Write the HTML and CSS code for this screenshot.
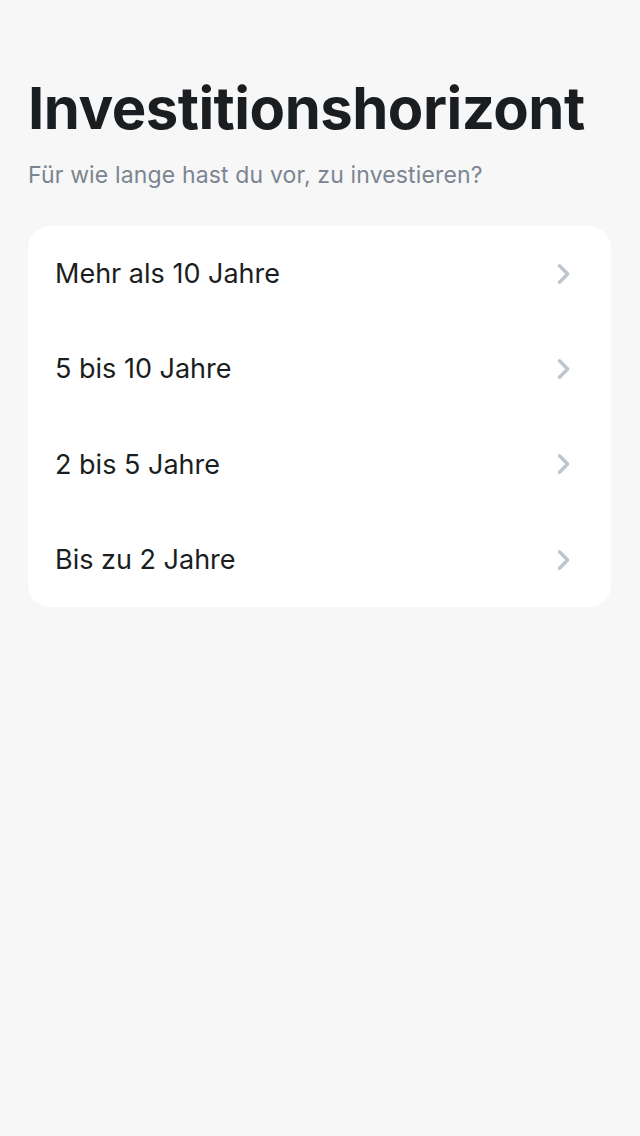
FILE: index.html
```html
<!DOCTYPE html>
<html lang="de">

<head>
    <meta charset="UTF-8">
    <meta name="viewport" content="width=device-width, initial-scale=1.0">
    <title>Investitionshorizont</title>
    <link rel="stylesheet" href="styles.css">
</head>

<body>
    <div class="screen">
        <h1 class="title">Investitionshorizont</h1>
        <p class="subtitle">Für wie lange hast du vor, zu investieren?</p>

        <div class="options">
            <div class="option">
                <span>Mehr als 10 Jahre</span>
                <svg class="chevron" viewBox="0 0 24 24"><path d="M9 5l7 7-7 7"/></svg>
            </div>
            <div class="option">
                <span>5 bis 10 Jahre</span>
                <svg class="chevron" viewBox="0 0 24 24"><path d="M9 5l7 7-7 7"/></svg>
            </div>
            <div class="option">
                <span>2 bis 5 Jahre</span>
                <svg class="chevron" viewBox="0 0 24 24"><path d="M9 5l7 7-7 7"/></svg>
            </div>
            <div class="option">
                <span>Bis zu 2 Jahre</span>
                <svg class="chevron" viewBox="0 0 24 24"><path d="M9 5l7 7-7 7"/></svg>
            </div>
        </div>
    </div>
</body>

</html>
```

FILE: styles.css
```css
body {
    margin: 0;
    font-family: Inter, "Noto Sans", sans-serif;
    background-color: #f7f7f7;
    color: #1b1e21;
}

.screen {
    padding: 72px 28px 0 28px;
}

.title {
    font-size: 58px;
    font-weight: 700;
    letter-spacing: -0.5px;
    line-height: 72px;
    margin: 0;
}

.subtitle {
    font-size: 23px;
    letter-spacing: 0.15px;
    color: #7b8591;
    margin: 17px 0 37px 0;
    line-height: 28px;
}

.options {
    background: white;
    border-radius: 22px;
    width: 583px;
}

.option {
    display: flex;
    align-items: center;
    justify-content: space-between;
    height: 95.3px;
    padding: 0 34px 0 27px;
    font-size: 27px;
}

.chevron {
    width: 28px;
    height: 28px;
    fill: none;
    stroke: #c0c6cd;
    stroke-width: 3;
    stroke-linecap: round;
    stroke-linejoin: round;
}
```
